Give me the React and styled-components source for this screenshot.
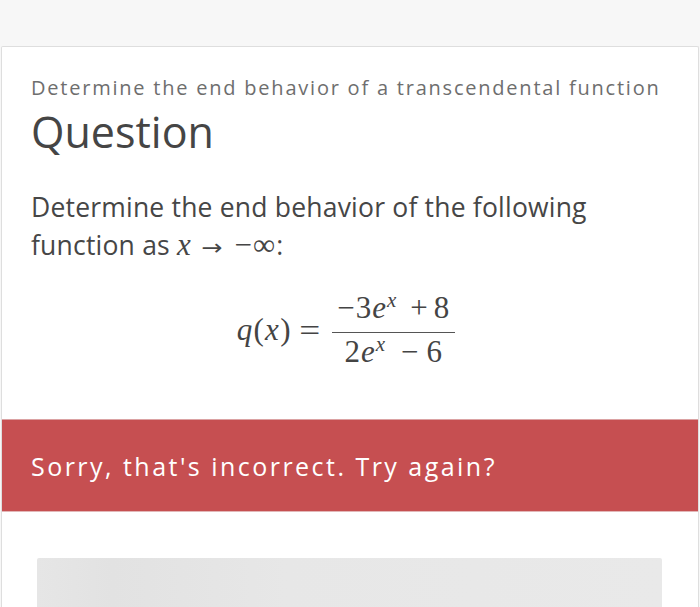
import React from "react";
import styled, { createGlobalStyle } from "styled-components";

const Global = createGlobalStyle`
  html, body { margin: 0; padding: 0; background: #f7f7f7; }
  body { font-family: "Open Sans", "Noto Sans", sans-serif; }
`;

const Page = styled.div`
  width: 700px;
  height: 607px;
  overflow: hidden;
  background: #f7f7f7;
  padding-top: 46px;
  box-sizing: border-box;
`;

const Card = styled.div`
  margin: 0 1px;
  background: #fff;
  border: 1px solid #dedede;
  border-bottom: none;
  border-radius: 2px 2px 0 0;
  min-height: 600px;
`;

const Header = styled.div`
  padding: 28px 29px 0;
`;

const Subtitle = styled.div`
  font-size: 20px;
  letter-spacing: 1.78px;
  color: #6e6e6e;
  line-height: 26px;
  white-space: nowrap;
`;

const Title = styled.h1`
  margin: 5px 0 0;
  font-size: 43px;
  font-weight: 400;
  color: #454545;
  line-height: 52px;
`;

const Body = styled.div`
  padding: 31px 29px 0;
  font-size: 26.5px;
  line-height: 37px;
  color: #464646;
  letter-spacing: 0.2px;
`;

const MathInline = styled.span`
  font-family: "Liberation Serif", "Times New Roman", serif;
  font-size: 31px;
  font-style: ${(p) => (p.$italic ? "italic" : "normal")};
  letter-spacing: 1px;
`;

const Arrow = styled.span`
  display: inline-block;
  font-family: "DejaVu Sans", sans-serif;
  font-size: 22px;
  line-height: 1;
  margin: 0 6px 0 4px;
  transform: scaleX(1.15);
`;

const MathRow = styled.div`
  display: flex;
  justify-content: center;
  align-items: center;
  margin-top: 29px;
  padding-right: 8px;
  font-family: "Liberation Serif", "Times New Roman", serif;
  font-size: 31px;
  letter-spacing: 1px;
  color: #444;
`;

const Lhs = styled.span`
  line-height: 30px;
  letter-spacing: 1.3px;
`;

const Op = styled.span`
  display: inline-block;
  margin: 0 ${(p) => p.$right ?? 3}px 0 ${(p) => p.$left ?? 3}px;
  letter-spacing: 0;
  transform: ${(p) => (p.$wide ? "scaleX(1.2)" : "none")};
`;

const Frac = styled.span`
  display: inline-flex;
  flex-direction: column;
  align-items: stretch;
  margin-left: 6px;
`;

const Num = styled.span`
  padding: 0 5px 9px;
  line-height: 30px;
  text-align: center;
  white-space: nowrap;
`;

const Den = styled.span`
  border-top: 1.5px solid #555;
  padding: 4px 5px 0;
  line-height: 30px;
  text-align: center;
  white-space: nowrap;
`;

const Sup = styled.sup`
  font-style: italic;
  font-size: 21px;
  vertical-align: 11px;
  line-height: 0;
`;

const Banner = styled.div`
  margin-top: 52px;
  background: #c64f51;
  border-top: 1px solid #dba2a3;
  border-bottom: 1px solid #e2b7b8;
  padding: 31px 29px 30px;
  color: #fff;
  font-size: 25px;
  line-height: 30px;
  letter-spacing: 2.47px;
  white-space: nowrap;
`;

const Placeholder = styled.div`
  margin: 46px 36px 0 35px;
  height: 60px;
  border-radius: 2px;
  background: linear-gradient(90deg, #e6e6e6 0%, #e2e2e2 12%, #e7e7e7 40%, #e9e9e9 100%);
`;

export default function App() {
  return (
    <>
      <Global />
      <Page>
        <Card>
          <Header>
            <Subtitle>Determine the end behavior of a transcendental function</Subtitle>
            <Title>Question</Title>
          </Header>
          <Body>
            Determine the end behavior of the following
            <br />
            function as <MathInline $italic>x</MathInline>{" "}
            <Arrow>→</Arrow>{" "}
            <MathInline>−∞</MathInline>:
            <MathRow>
              <Lhs>
                <i>q</i>(<i>x</i>)
              </Lhs>
              <Op $left={9} $right={8} $wide>=</Op>
              <Frac>
                <Num>
                  −3<i>e</i>
                  <Sup>x</Sup>
                  <Op $left={13} $right={6}>+</Op>8
                </Num>
                <Den>
                  2<i>e</i>
                  <Sup>x</Sup>
                  <Op $left={15} $right={8}>−</Op>6
                </Den>
              </Frac>
            </MathRow>
          </Body>
          <Banner>Sorry, that's incorrect. Try again?</Banner>
          <Placeholder />
        </Card>
      </Page>
    </>
  );
}
